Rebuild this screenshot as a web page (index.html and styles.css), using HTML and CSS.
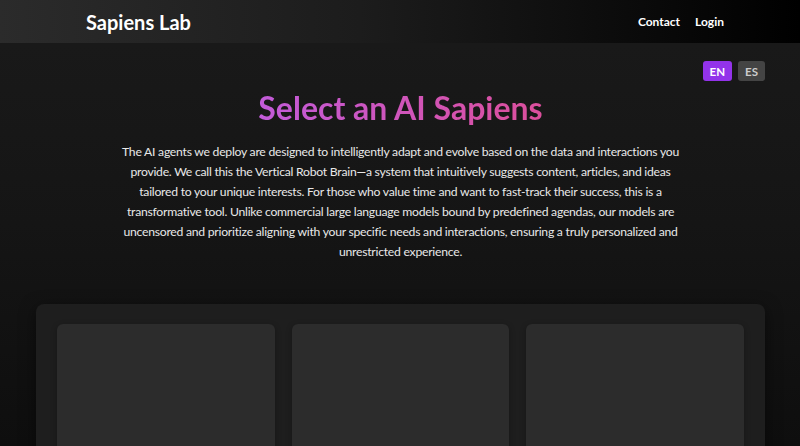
FILE: index.html
```html
<!DOCTYPE html>
<html lang="en">
<head>
<meta charset="utf-8">
<title>Sapiens Lab</title>
<link rel="stylesheet" href="styles.css">
</head>
<body>
<header class="topbar">
  <div class="brand">Sapiens Lab</div>
  <nav class="nav">
    <a href="#" class="nav-link">Contact</a>
    <a href="#" class="nav-link">Login</a>
  </nav>
</header>
<main class="main">
  <div class="lang">
    <button class="lang-btn active">EN</button>
    <button class="lang-btn">ES</button>
  </div>
  <h1 class="title">Select an AI Sapiens</h1>
  <p class="intro">The AI agents we deploy are designed to intelligently adapt and evolve based on the data and interactions you provide. We call this the Vertical Robot Brain—a system that intuitively suggests content, articles, and ideas tailored to your unique interests. For those who value time and want to fast-track their success, this is a transformative tool. Unlike commercial large language models bound by predefined agendas, our models are uncensored and prioritize aligning with your specific needs and interactions, ensuring a truly personalized and unrestricted experience.</p>
  <section class="panel">
    <div class="card"></div>
    <div class="card"></div>
    <div class="card"></div>
  </section>
</main>
</body>
</html>
```

FILE: styles.css
```css
* { box-sizing: border-box; }
html, body { margin: 0; height: 100%; }
body {
  font-family: Lato, "Open Sans", sans-serif;
  background: linear-gradient(to bottom, #1a1a1a 0%, #151515 50%, #0e0e0e 100%);
  color: #ddd;
  overflow: hidden;
}
.topbar {
  height: 43px;
  display: flex;
  align-items: center;
  justify-content: space-between;
  padding: 0 76px 0 86px;
  background: linear-gradient(to right, #2b2b2b 0%, #1c1c1c 45%, #000 100%);
}
.brand {
  color: #fff;
  font-weight: 700;
  font-size: 20px;
}
.nav { display: flex; gap: 15px; }
.nav-link {
  color: #fff;
  text-decoration: none;
  font-weight: 700;
  font-size: 12px;
}
.main {
  padding: 18px 35px 0 36px;
  display: flex;
  flex-direction: column;
  align-items: center;
}
.lang {
  align-self: flex-end;
  display: flex;
  gap: 6px;
}
.lang-btn {
  border: none;
  border-radius: 3px;
  height: 20px;
  padding: 0 7px;
  font-family: inherit;
  font-size: 11.5px;
  font-weight: 700;
  color: #ccc;
  background: #444;
}
.lang-btn.active { background: #9333ea; color: #fff; }
.title {
  margin: 7px 0 0;
  font-size: 32px;
  font-weight: 700;
  line-height: 40px;
  background: linear-gradient(to right, #c25bd9, #dc4f9c);
  -webkit-background-clip: text;
  background-clip: text;
  color: transparent;
}
.intro {
  margin: 14px 0 0;
  width: 564px;
  text-align: center;
  font-size: 12.2px;
  letter-spacing: -0.25px;
  line-height: 20px;
  color: #e8e8e8;
}
.panel {
  margin-top: 42px;
  align-self: stretch;
  background: #1e1e1e;
  border-radius: 8px;
  padding: 20px 21px;
  display: grid;
  grid-template-columns: repeat(3, 1fr);
  gap: 17px;
  height: 200px;
  box-shadow: 0 4px 16px rgba(0,0,0,0.5);
}
.card {
  background: #2c2c2c;
  border-radius: 6px;
  box-shadow: 0 2px 6px rgba(0,0,0,0.3);
}
```
